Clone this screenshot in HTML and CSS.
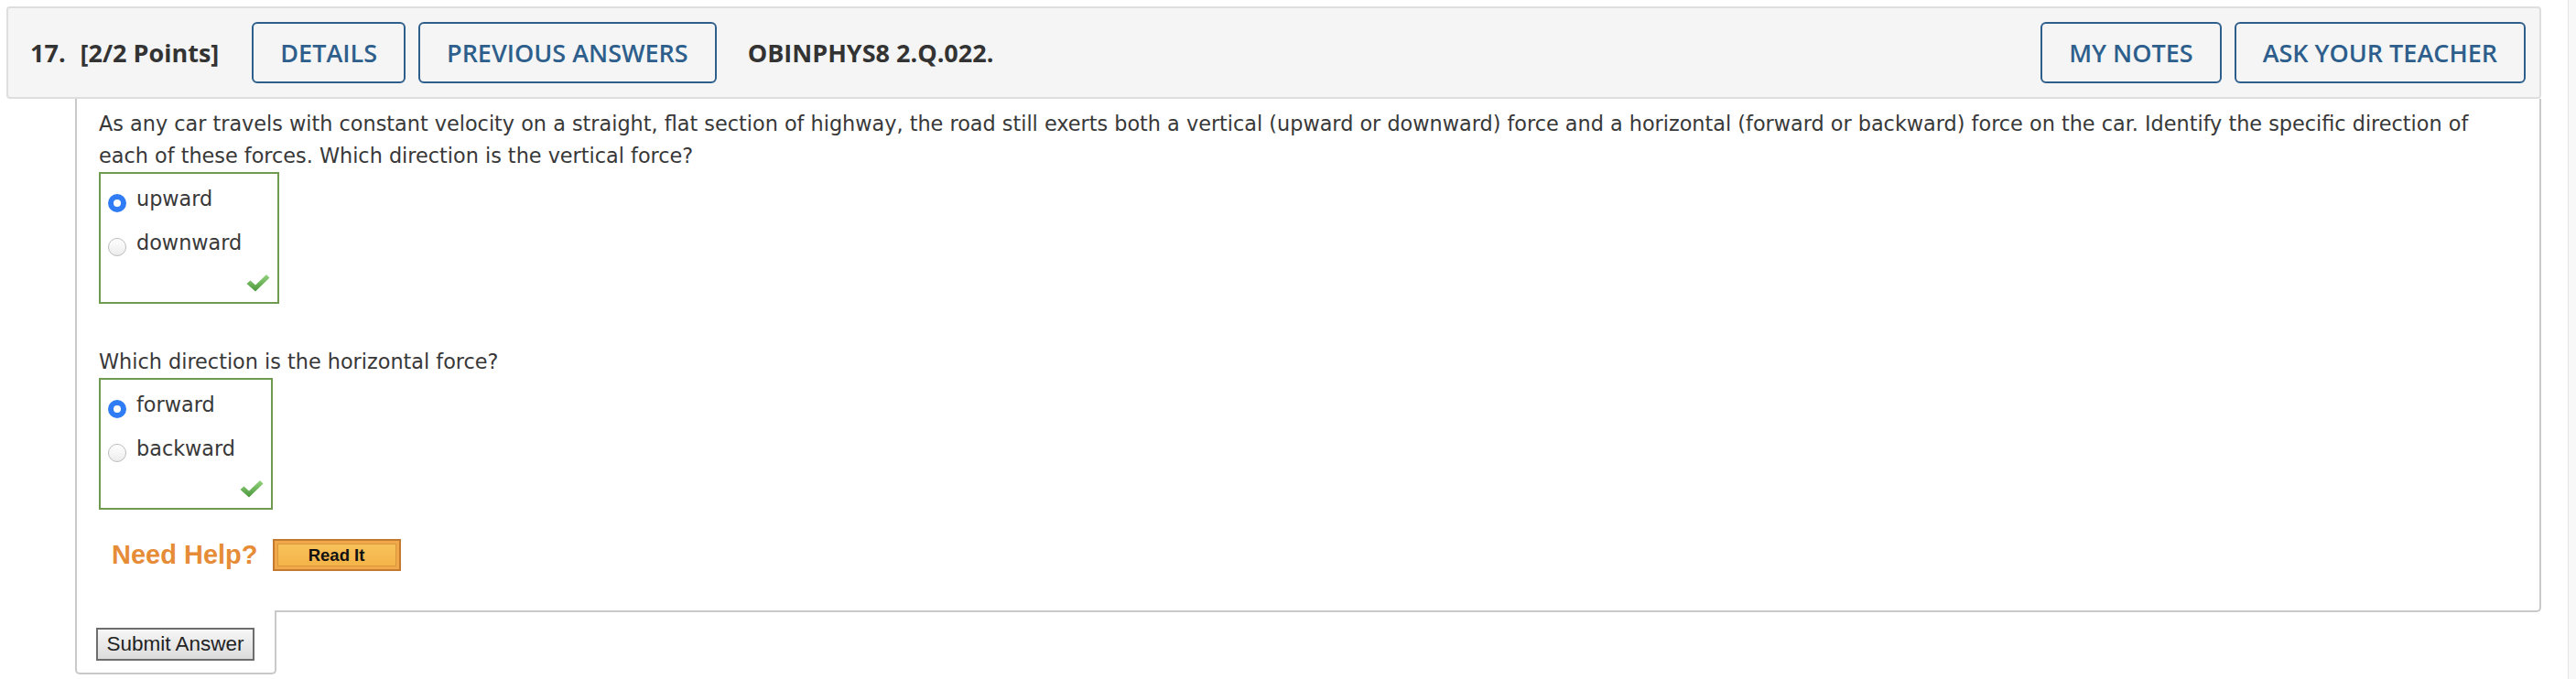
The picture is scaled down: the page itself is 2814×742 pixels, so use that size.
FILE: index.html
```html
<!DOCTYPE html>
<html>
<head>
<meta charset="utf-8">
<link rel="stylesheet" href="styles.css">
</head>
<body>
<div class="page">
  <main class="main">
    <div class="qhead">
      <span class="qnum">17.</span>
      <span class="qpoints">[2/2 Points]</span>
      <span class="hbtn hbtn-first">DETAILS</span>
      <span class="hbtn">PREVIOUS ANSWERS</span>
      <span class="qcode">OBINPHYS8 2.Q.022.</span>
      <span class="spacer"></span>
      <span class="hbtn">MY NOTES</span>
      <span class="hbtn">ASK YOUR TEACHER</span>
    </div>
    <div class="qbody">
      <p class="qtext">As any car travels with constant velocity on a straight, flat section of highway, the road still exerts both a vertical (upward or downward) force and a horizontal (forward or backward) force on the car. Identify the specific direction of each of these forces. Which direction is the vertical force?</p>
      <div class="answer">
        <div class="opt"><span class="radio on"></span>upward</div>
        <div class="opt"><span class="radio"></span>downward</div>
        <div class="checkrow">
          <svg class="check" width="26" height="20" viewBox="0 0 26 20">
            <defs><linearGradient id="g1" x1="0" y1="0" x2="0" y2="1"><stop offset="0" stop-color="#94d47e"/><stop offset="1" stop-color="#4a963b"/></linearGradient></defs>
            <path d="M0.5 11 L4.5 7.5 L10 12.5 L22 1 L25.5 4.5 L10 19.5 Z" fill="url(#g1)"/>
          </svg>
        </div>
      </div>
      <p class="qtext q2">Which direction is the horizontal force?</p>
      <div class="answer">
        <div class="opt"><span class="radio on"></span>forward</div>
        <div class="opt"><span class="radio"></span>backward</div>
        <div class="checkrow">
          <svg class="check" width="26" height="20" viewBox="0 0 26 20">
            <defs><linearGradient id="g2" x1="0" y1="0" x2="0" y2="1"><stop offset="0" stop-color="#94d47e"/><stop offset="1" stop-color="#4a963b"/></linearGradient></defs>
            <path d="M0.5 11 L4.5 7.5 L10 12.5 L22 1 L25.5 4.5 L10 19.5 Z" fill="url(#g2)"/>
          </svg>
        </div>
      </div>
      <div class="help">
        <span class="needhelp">Need Help?</span>
        <span class="readit"><span class="readit-inner">Read It</span></span>
      </div>
    </div>
    <div class="tab">
      <span class="submit">Submit Answer</span>
    </div>
  </main>
  <div class="scrolltrack"></div>
</div>
</body>
</html>
```
FILE: styles.css
```css
html, body {
  margin: 0;
  padding: 0;
  background: #ffffff;
}
.page {
  display: flex;
  min-height: 742px;
}
.main {
  flex: 1;
  padding: 7px 29px 0 7px;
}
.scrolltrack {
  width: 8px;
  border-left: 1px solid #e4e4e4;
  background: #f8f8f8;
}
.qhead {
  box-sizing: border-box;
  height: 101px;
  display: flex;
  align-items: center;
  background: #f5f5f5;
  border: 2px solid #dedede;
  border-radius: 4px;
  padding: 0 15px 0 24px;
  font-family: "Open Sans", "Liberation Sans", sans-serif;
  font-size: 27px;
  color: #333333;
}
.qnum {
  font-weight: 700;
  margin-right: 16px;
}
.qpoints {
  font-weight: 700;
  margin-right: 36px;
}
.qcode {
  font-weight: 700;
  margin-left: 34px;
}
.spacer {
  flex: 1;
}
.hbtn {
  box-sizing: border-box;
  height: 67px;
  display: inline-flex;
  align-items: center;
  padding: 0 29px;
  border: 2px solid #2e5f8c;
  border-radius: 6px;
  color: #2e5f8c;
  font-weight: 600;
  margin-left: 14px;
}
.hbtn-first {
  margin-left: 0;
}
.qbody {
  margin-left: 75px;
  border: 2px solid #c9c9c9;
  border-top: none;
  border-radius: 0 0 5px 0;
  padding: 10px 30px 43px 24px;
  font-family: "DejaVu Sans", Verdana, sans-serif;
  font-size: 22.35px;
  line-height: 35px;
  color: #383838;
}
.qtext {
  margin: 0;
}
.q2 {
  margin-top: 46px;
}
.answer {
  display: inline-block;
  vertical-align: top;
  border: 2px solid #6e9b4d;
  padding: 10px 39px 4px 8px;
}
.opt {
  height: 35px;
  margin-bottom: 13px;
  white-space: nowrap;
}
.radio {
  display: inline-block;
  box-sizing: border-box;
  width: 20px;
  height: 20px;
  border-radius: 50%;
  border: 1px solid #bcbcbc;
  background: linear-gradient(#ffffff, #ececec);
  vertical-align: -7px;
  margin-right: 11px;
}
.radio.on {
  border: 6px solid #2f7cf5;
  background: #ffffff;
}
.checkrow {
  height: 30px;
  margin-right: -31px;
  display: flex;
  justify-content: flex-end;
  align-items: flex-end;
}
.check {
  display: block;
  margin-bottom: 7px;
}
.help {
  margin-top: 32px;
  display: flex;
  align-items: center;
  padding-left: 14px;
  height: 35px;
}
.needhelp {
  font-family: "Liberation Sans", Arial, sans-serif;
  font-weight: 700;
  font-size: 29px;
  color: #e68c37;
  margin-right: 16px;
}
.readit {
  box-sizing: border-box;
  width: 140px;
  height: 35px;
  display: flex;
  padding: 3px;
  background: #f0a84a;
  border: 2px solid #c47a2e;
}
.readit-inner {
  flex: 1;
  display: flex;
  align-items: center;
  justify-content: center;
  background: linear-gradient(#f8c15a, #f4b449);
  border: 1px solid #d9973d;
  font-family: "Liberation Sans", Arial, sans-serif;
  font-weight: 700;
  font-size: 18.5px;
  color: #111111;
}
.tab {
  box-sizing: border-box;
  width: 220px;
  margin-left: 75px;
  margin-top: -2px;
  background: #ffffff;
  border: 2px solid #c9c9c9;
  border-top: none;
  border-radius: 0 0 5px 5px;
  padding: 19px 21px 13px 21px;
}
.submit {
  box-sizing: border-box;
  display: inline-flex;
  align-items: center;
  justify-content: center;
  width: 173px;
  height: 36px;
  border: 2px solid #6d6d6d;
  background: linear-gradient(#f6f6f6, #dcdcdc);
  font-family: "Liberation Sans", Arial, sans-serif;
  font-size: 22.5px;
  color: #222222;
}
```
